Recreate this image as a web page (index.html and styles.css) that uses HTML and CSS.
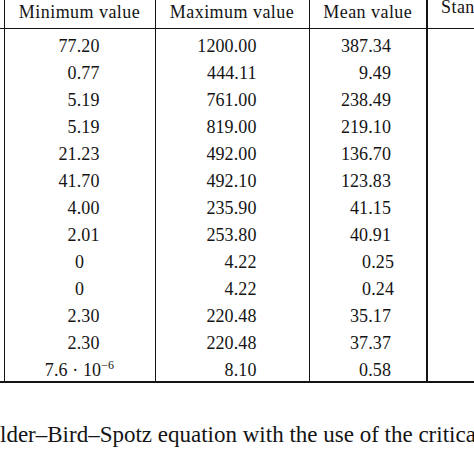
FILE: index.html
```html
<!DOCTYPE html>
<html>
<head>
<meta charset="utf-8">
<link rel="stylesheet" href="styles.css">
</head>
<body>
<div class="sheet">
  <table class="data">
    <colgroup>
      <col class="w0"><col class="w1"><col class="w2"><col class="w3"><col class="w4">
    </colgroup>
    <thead>
      <tr>
        <th class="k0"></th>
        <th class="k1">Minimum value</th>
        <th class="k2">Maximum value</th>
        <th class="k3">Mean value</th>
        <th class="k4 sd">Standard deviation</th>
      </tr>
    </thead>
    <tbody>
      <tr><td class="k0"></td><td class="k1">77.20</td><td class="k2">1200.00</td><td class="k3">387.34</td><td class="k4"></td></tr>
      <tr><td class="k0"></td><td class="k1">0.77</td><td class="k2">444.11</td><td class="k3">9.49</td><td class="k4"></td></tr>
      <tr><td class="k0"></td><td class="k1">5.19</td><td class="k2">761.00</td><td class="k3">238.49</td><td class="k4"></td></tr>
      <tr><td class="k0"></td><td class="k1">5.19</td><td class="k2">819.00</td><td class="k3">219.10</td><td class="k4"></td></tr>
      <tr><td class="k0"></td><td class="k1">21.23</td><td class="k2">492.00</td><td class="k3">136.70</td><td class="k4"></td></tr>
      <tr><td class="k0"></td><td class="k1">41.70</td><td class="k2">492.10</td><td class="k3">123.83</td><td class="k4"></td></tr>
      <tr><td class="k0"></td><td class="k1">4.00</td><td class="k2">235.90</td><td class="k3">41.15</td><td class="k4"></td></tr>
      <tr><td class="k0"></td><td class="k1">2.01</td><td class="k2">253.80</td><td class="k3">40.91</td><td class="k4"></td></tr>
      <tr><td class="k0"></td><td class="k1 mid">0</td><td class="k2">4.22</td><td class="k3 nudge">0.25</td><td class="k4"></td></tr>
      <tr><td class="k0"></td><td class="k1 mid">0</td><td class="k2">4.22</td><td class="k3 nudge">0.24</td><td class="k4"></td></tr>
      <tr><td class="k0"></td><td class="k1">2.30</td><td class="k2">220.48</td><td class="k3">35.17</td><td class="k4"></td></tr>
      <tr><td class="k0"></td><td class="k1">2.30</td><td class="k2">220.48</td><td class="k3">37.37</td><td class="k4"></td></tr>
      <tr class="last"><td class="k0"></td><td class="k1 mid">7.6 · 10<sup>−6</sup></td><td class="k2">8.10</td><td class="k3">0.58</td><td class="k4"></td></tr>
    </tbody>
  </table>
  <p class="caption">lder–Bird–Spotz equation with the use of the critical parameters</p>
</div>
</body>
</html>
```

FILE: styles.css
```css
html, body {
  margin: 0;
  padding: 0;
  background: #ffffff;
}

body {
  width: 474px;
  height: 474px;
  overflow: hidden;
  font-family: "Liberation Serif", "Times New Roman", serif;
  color: #141414;
}

.sheet {
  margin-top: -21px;
  margin-left: -20px;
}

.data {
  border-collapse: collapse;
  table-layout: fixed;
  width: 567px;
  font-size: 18px;
}

.w0 { width: 24px; }
.w1 { width: 151px; }
.w2 { width: 154px; }
.w3 { width: 118px; }
.w4 { width: 120px; }

.data th {
  font-weight: normal;
  height: 38px;
  padding: 0 0 5.5px;
  line-height: 19px;
  vertical-align: bottom;
  text-align: center;
  white-space: nowrap;
  overflow: hidden;
  border-bottom: 1.5px solid #141414;
  letter-spacing: 0.45px;
}

.data th.sd {
  text-align: left;
  padding-left: 13px;
  padding-bottom: 10.5px;
}

.data tbody tr {
  height: 27px;
}

.data tbody tr.last {
  height: 29px;
}

.data td {
  padding: 8px 0 0;
  line-height: 19px;
  vertical-align: top;
  text-align: right;
  white-space: nowrap;
  letter-spacing: 0.1px;
}

.data tr.last td {
  border-bottom: 2px solid #141414;
}

.k1 {
  border-left: 1.5px solid #141414;
}

.k2, .k3 {
  border-left: 1.5px solid #141414;
}

.k4 {
  border-left: 2px solid #141414;
}

.data td.k1 { padding-right: 55px; }
.data td.k2 { padding-right: 52px; }
.data td.k3 { padding-right: 35px; }
.data td.k3.nudge { padding-right: 32px; }

.data td.mid {
  text-align: center;
  padding-right: 0;
}

.data sup {
  font-size: 12px;
  line-height: 0;
  vertical-align: 7px;
}

.caption {
  margin: 37px 0 0 20px;
  font-size: 23px;
  line-height: 30px;
  white-space: nowrap;
}
```
